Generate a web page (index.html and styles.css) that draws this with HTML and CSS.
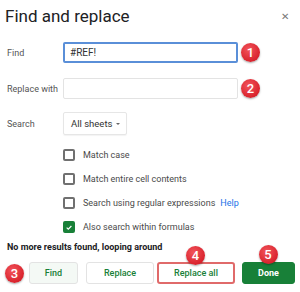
FILE: index.html
```html
<!DOCTYPE html>
<html lang="en">
<head>
    <meta charset="UTF-8">
    <title>Find and replace</title>
    <link rel="stylesheet" href="styles.css">
</head>
<body>
    <div class="dialog">
        <div class="title-bar">
            <h1>Find and replace</h1>
            <span class="close">&#x2715;</span>
        </div>

        <div class="form-row row-find">
            <label>Find</label>
            <div class="text-input focused">#REF!</div>
            <span class="badge">1</span>
        </div>
        <div class="form-row row-replace">
            <label>Replace with</label>
            <div class="text-input"></div>
            <span class="badge">2</span>
        </div>
        <div class="form-row row-search">
            <label>Search</label>
            <div class="dropdown">All sheets <span class="caret"></span></div>
        </div>

        <div class="options">
            <div class="option"><span class="checkbox"></span>Match case</div>
            <div class="option"><span class="checkbox"></span>Match entire cell contents</div>
            <div class="option"><span class="checkbox"></span>Search using regular expressions <a class="help">Help</a></div>
            <div class="option">
                <span class="checkbox checked">
                    <svg width="11" height="11" viewBox="0 0 11 11"><path d="M2.3 5.6 L4.5 7.8 L8.8 3.4" fill="none" stroke="#fff" stroke-width="1.6"/></svg>
                </span>Also search within formulas
            </div>
        </div>

        <div class="status">No more results found, looping around</div>

        <div class="actions">
            <span class="badge">3</span>
            <button class="btn btn-find">Find</button>
            <button class="btn btn-replace">Replace</button>
            <button class="btn btn-replace-all">Replace all<span class="badge badge-top">4</span></button>
            <button class="btn btn-done">Done<span class="badge badge-top">5</span></button>
        </div>
    </div>
</body>
</html>
```

FILE: styles.css
```css
* {
    margin: 0;
    padding: 0;
    box-sizing: border-box;
    font-family: Roboto, "Liberation Sans", Arial, sans-serif;
}

body {
    background-color: #fff;
    width: 300px;
    height: 292px;
    overflow: hidden;
}

.dialog {
    padding: 4px 0 0 7px;
}

.title-bar {
    display: flex;
    justify-content: space-between;
    align-items: center;
    height: 24px;
    padding-right: 11px;
}

.title-bar h1 {
    font-size: 17px;
    font-weight: 400;
    color: #202124;
    margin-left: -2px;
}

.close {
    font-size: 10px;
    color: #777;
}

.form-row {
    display: flex;
    align-items: center;
}

.form-row label {
    width: 56px;
    flex-shrink: 0;
    white-space: nowrap;
    font-size: 9px;
    color: #555;
}

.row-find {
    margin-top: 14px;
}

.row-replace {
    margin-top: 15px;
}

.row-search {
    margin-top: 13px;
}

.text-input {
    width: 175px;
    height: 21px;
    flex-shrink: 0;
    border: 1px solid #e3e3e3;
    border-radius: 2px;
    font-size: 10px;
    color: #333;
    padding: 4px 5px;
}

.text-input.focused {
    border: 2px solid #5a8fd8;
    padding: 3px 5px;
}

.dropdown {
    height: 23px;
    border: 1px solid #e6e6e6;
    border-radius: 2px;
    box-shadow: 0 1px 1px rgba(0,0,0,0.05);
    font-size: 9.5px;
    color: #333;
    white-space: nowrap;
    display: flex;
    align-items: center;
    padding: 0 6px 0 7px;
}

.caret {
    margin-left: 4px;
    border-left: 2.5px solid transparent;
    border-right: 2.5px solid transparent;
    border-top: 2.5px solid #666;
}

.badge {
    width: 19px;
    height: 19px;
    border-radius: 50%;
    background: radial-gradient(circle at 40% 35%, #f2545b, #d9232d 70%, #b81a22);
    box-shadow: 0 1px 2px rgba(0,0,0,0.35);
    color: #fff;
    font-size: 13px;
    font-weight: 500;
    display: flex;
    align-items: center;
    justify-content: center;
    margin-left: 3px;
    flex-shrink: 0;
}

.options {
    margin-top: 8px;
    padding-left: 56px;
}

.option {
    display: flex;
    align-items: center;
    height: 24px;
    font-size: 9px;
    color: #4a4a4a;
    white-space: nowrap;
}

.checkbox {
    width: 12px;
    height: 12px;
    flex-shrink: 0;
    border: 2px solid #707070;
    border-radius: 2px;
    margin-right: 8px;
    display: flex;
    align-items: center;
    justify-content: center;
}

.checkbox.checked {
    background-color: #188038;
    border-color: #188038;
}

.help {
    color: #1a73e8;
    margin-left: 5px;
}

.status {
    margin-top: 3px;
    font-size: 9px;
    font-weight: bold;
    color: #202124;
}

.actions {
    display: flex;
    align-items: center;
    margin-top: 10px;
    margin-left: -2px;
}

.actions > .badge {
    margin-left: 0;
    margin-right: 5px;
}

.btn {
    position: relative;
    height: 22px;
    flex-shrink: 0;
    border: 1px solid #e3e3e3;
    border-radius: 3px;
    background-color: #fff;
    color: #188038;
    font-size: 9px;
    font-weight: 500;
}

.btn-find {
    width: 49px;
    background-color: #f4f9f5;
}

.btn-replace {
    width: 68px;
    margin-left: 8px;
}

.btn-replace-all {
    width: 78px;
    margin-left: 3px;
    border: 2px solid #e06a6a;
}

.btn-done {
    width: 53px;
    margin-left: 7px;
    background-color: #188038;
    border-color: #188038;
    color: #fff;
    font-weight: bold;
}

.badge-top {
    position: absolute;
    left: 50%;
    bottom: 100%;
    margin: 0 0 -1px -10px;
}
```
